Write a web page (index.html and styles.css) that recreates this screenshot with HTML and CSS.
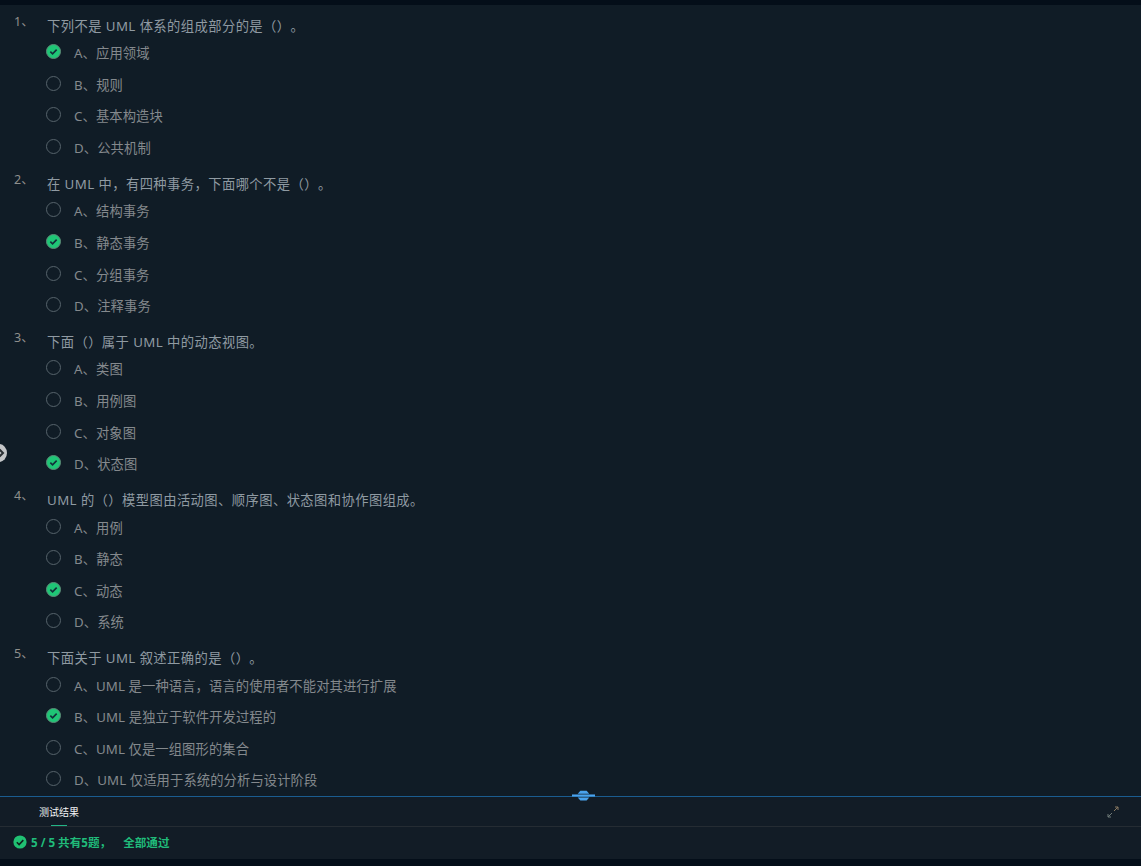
FILE: index.html
```html
<!DOCTYPE html>
<html lang="zh">
<head>
<meta charset="utf-8">
<title>测试结果</title>
<link rel="stylesheet" href="styles.css">
</head>
<body>
<div class="app">
  <div class="topstrip"></div>
  <main class="questions">
    <section class="q">
      <div class="q-title"><span class="q-num">1、</span><span>下列不是 UML 体系的组成部分的是（）。</span></div>
      <div class="opt"><span class="radio on"><svg viewBox="0 0 14 14"><path d="M3.6 7.2l2.4 2.3 4.4-4.5"/></svg></span><span>A、应用领域</span></div>
      <div class="opt"><span class="radio"></span><span>B、规则</span></div>
      <div class="opt"><span class="radio"></span><span>C、基本构造块</span></div>
      <div class="opt"><span class="radio"></span><span>D、公共机制</span></div>
    </section>
    <section class="q">
      <div class="q-title"><span class="q-num">2、</span><span>在 UML 中，有四种事务，下面哪个不是（）。</span></div>
      <div class="opt"><span class="radio"></span><span>A、结构事务</span></div>
      <div class="opt"><span class="radio on"><svg viewBox="0 0 14 14"><path d="M3.6 7.2l2.4 2.3 4.4-4.5"/></svg></span><span>B、静态事务</span></div>
      <div class="opt"><span class="radio"></span><span>C、分组事务</span></div>
      <div class="opt"><span class="radio"></span><span>D、注释事务</span></div>
    </section>
    <section class="q">
      <div class="q-title"><span class="q-num">3、</span><span>下面（）属于 UML 中的动态视图。</span></div>
      <div class="opt"><span class="radio"></span><span>A、类图</span></div>
      <div class="opt"><span class="radio"></span><span>B、用例图</span></div>
      <div class="opt"><span class="radio"></span><span>C、对象图</span></div>
      <div class="opt"><span class="radio on"><svg viewBox="0 0 14 14"><path d="M3.6 7.2l2.4 2.3 4.4-4.5"/></svg></span><span>D、状态图</span></div>
    </section>
    <section class="q">
      <div class="q-title"><span class="q-num">4、</span><span>UML 的（）模型图由活动图、顺序图、状态图和协作图组成。</span></div>
      <div class="opt"><span class="radio"></span><span>A、用例</span></div>
      <div class="opt"><span class="radio"></span><span>B、静态</span></div>
      <div class="opt"><span class="radio on"><svg viewBox="0 0 14 14"><path d="M3.6 7.2l2.4 2.3 4.4-4.5"/></svg></span><span>C、动态</span></div>
      <div class="opt"><span class="radio"></span><span>D、系统</span></div>
    </section>
    <section class="q">
      <div class="q-title"><span class="q-num">5、</span><span>下面关于 UML 叙述正确的是（）。</span></div>
      <div class="opt"><span class="radio"></span><span>A、UML 是一种语言，语言的使用者不能对其进行扩展</span></div>
      <div class="opt"><span class="radio on"><svg viewBox="0 0 14 14"><path d="M3.6 7.2l2.4 2.3 4.4-4.5"/></svg></span><span>B、UML 是独立于软件开发过程的</span></div>
      <div class="opt"><span class="radio"></span><span>C、UML 仅是一组图形的集合</span></div>
      <div class="opt"><span class="radio"></span><span>D、UML 仅适用于系统的分析与设计阶段</span></div>
    </section>
  </main>
  <div class="side-handle"><svg viewBox="0 0 16 16"><path d="M5.5 4.5L9 8l-3.5 3.5"/></svg></div>
  <footer class="panel">
    <div class="divider">
      <svg class="grip" viewBox="0 0 22 10"><path class="grip-mid" d="M0 4h22v2H0z"/><path class="grip-fill" d="M5.5 3.4l2.5-3h6l2.5 3zM5.5 6.8h11l-2.5 3H8z"/></svg>
    </div>
    <div class="tabs">
      <span class="tab">测试结果</span>
      <svg class="expand" viewBox="0 0 12 12"><path class="exp-a" d="M7 5l4-4M8 1h3v3"/><path class="exp-b" d="M5 7l-4 4M1 8v3h3"/></svg>
    </div>
    <div class="result">
      <svg class="ok" viewBox="0 0 14 14"><circle cx="7" cy="7" r="6.6"/><path d="M3.8 7.2l2.3 2.3 4.2-4.4"/></svg>
      <span class="score">5 / 5 共有5题，</span>
      <span class="pass">全部通过</span>
    </div>
    <div class="bottomstrip"></div>
  </footer>
</div>
</body>
</html>
```
FILE: styles.css
```css
* { box-sizing: border-box; }
html, body { margin: 0; height: 100%; }
body {
  background: #101c26;
  color: #8f9499;
  font-family: "Noto Sans", "Noto Sans CJK SC", sans-serif;
  font-size: 13.3px;
  text-spacing-trim: space-all;
  overflow: hidden;
}
.app { position: relative; height: 866px; display: flex; flex-direction: column; }
.topstrip { height: 5px; background: #040e19; flex: none; }
.questions { flex: 1; min-height: 0; overflow: hidden; padding-top: 9px; }
.q { height: 158.1px; }
.q-title { display: flex; height: 22px; align-items: center; color: #8f9aa2; padding-left: 14px; letter-spacing: 0.42px; }
.q-num { width: 33px; flex: none; font-size: 12.5px; position: relative; top: -5px; letter-spacing: 0; color: #8e8f8c; }
.opt { display: flex; align-items: center; height: 31.6px; padding-left: 46px; position: relative; top: 1px; color: #84898d; letter-spacing: 0.1px; }
.radio {
  width: 15px; height: 15px; border-radius: 50%;
  border: 1px solid #56636b;
  margin-right: 13px;
  flex: none;
  position: relative; top: -1px;
}
.radio.on { background: #1fc676; border-color: #5d8b78; }
.radio svg { display: block; width: 13px; height: 13px; }
.radio path { fill: none; stroke: #12303a; stroke-width: 1.8; }
.side-handle {
  position: absolute; left: -9px; top: 444px;
  width: 16px; height: 18px; border-radius: 50%;
  background: #c4c6c8;
}
.side-handle svg { display: block; width: 16px; height: 18px; }
.side-handle path { fill: none; stroke: #2a2f33; stroke-width: 2; transform: translateX(3px); }
.panel { flex: none; height: 70px; display: flex; flex-direction: column; background: #121c26; }
.divider { height: 1px; background: #1a5c90; position: relative; flex: none; }
.grip { position: absolute; left: 572px; top: -6px; width: 23px; height: 11px; }
.grip-mid, .grip-fill { fill: #4aa3ee; }
.tabs { height: 30px; flex: none; display: flex; align-items: center; justify-content: space-between; padding: 0 21px 0 39px; border-bottom: 1px solid #252c33; position: relative; }
.tab { color: #f2f4f5; font-size: 10px; position: relative; top: 0; }
.tab::after { content: ""; position: absolute; left: 12px; right: 12px; bottom: -7px; height: 1px; background: #23b587; }
.expand { width: 12px; height: 12px; position: relative; left: -1px; top: 0; }
.expand path { fill: none; stroke-width: 1; }
.exp-a { stroke: #8a7a62; }
.exp-b { stroke: #6f7a78; }
.result { flex: 1; display: flex; align-items: center; padding: 0 0 2px 13px; color: #20bb7a; font-weight: 700; font-size: 11.6px; }
.ok { width: 14px; height: 14px; margin-right: 4px; flex: none; }
.ok circle { fill: #20c173; }
.ok path { fill: none; stroke: #10241f; stroke-width: 1.6; }
.score { margin-right: 12px; }
.bottomstrip { height: 7px; background: #040e19; flex: none; }
```
